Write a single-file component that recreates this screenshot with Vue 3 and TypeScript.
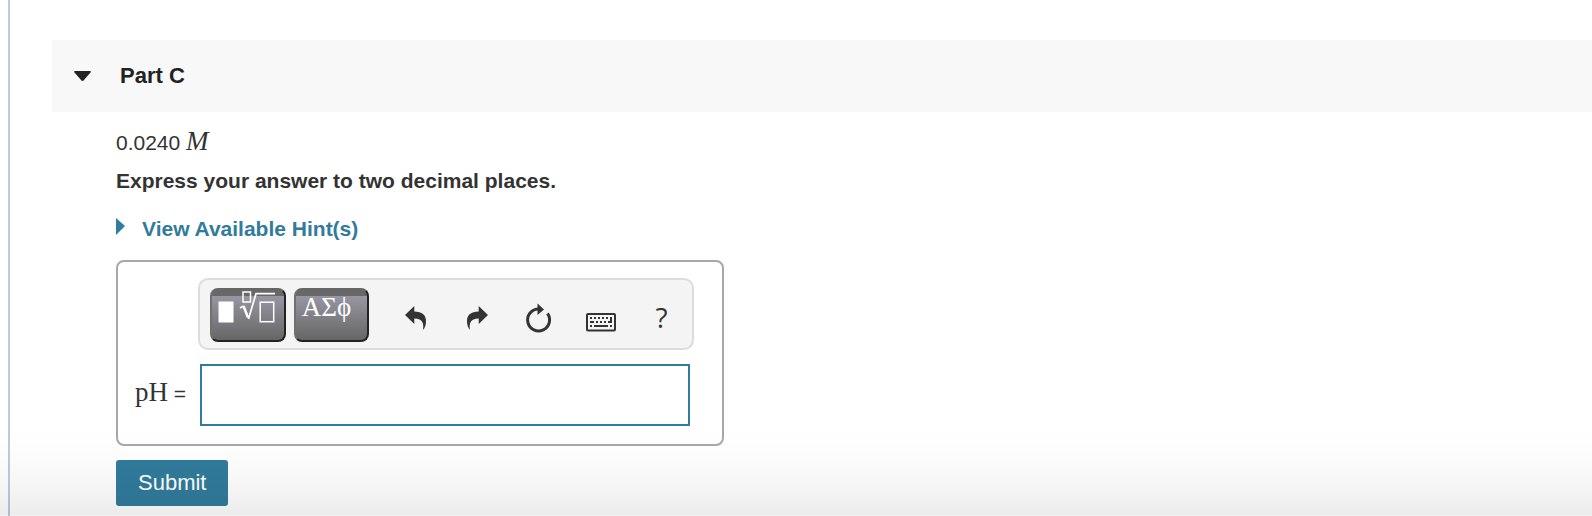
<script setup lang="ts">
import { ref } from 'vue'

const expanded = ref(true)
const answer = ref('')
</script>

<template>
  <main class="page">
    <section class="part">
      <h2 class="part-heading">
        <button class="part-toggle" type="button" :aria-expanded="expanded" @click="expanded = !expanded">
          <svg class="caret" viewBox="0 0 17 10" aria-hidden="true">
            <path d="M1 0H16Q17.5 0.4 16.5 1.6L10 9Q8.500 10.800 7 9L0.500 1.600Q-0.500 0.400 1 0Z" />
          </svg>
          <span>Part C</span>
        </button>
      </h2>

      <div v-if="expanded" class="content">
        <p class="line">0.0240 <i class="math">M</i></p>
        <p class="line strong">Express your answer to two decimal places.</p>
        <a class="hints" href="#hints">
          <svg class="hint-arrow" viewBox="0 0 9 17" aria-hidden="true">
            <path d="M0 0L9 8L0 17Z" />
          </svg>
          <span>View Available Hint(s)</span>
        </a>

        <form @submit.prevent>
          <div class="answer-box">
            <div class="toolbar" role="toolbar" aria-label="Equation tools">
              <button class="palette" type="button" aria-label="Templates">
                <svg class="templates" viewBox="0 0 72 50" aria-hidden="true">
                  <rect x="6.500" y="11.500" width="15" height="21" fill="#fff" />
                  <g fill="none" stroke="#fff">
                    <rect x="31" y="2" width="7.500" height="10" stroke-width="1.500" />
                    <path d="M28 18L31.500 16" stroke-width="1.500" />
                    <path d="M31.500 16L36 27.500" stroke-width="2.500" />
                    <path d="M36.500 29L44 3.700H63" stroke-width="1.700" />
                    <rect x="48.200" y="12.200" width="13.500" height="19.500" stroke-width="1.500" />
                  </g>
                </svg>
              </button>
              <button class="palette symbols" type="button" aria-label="Symbols">ΑΣϕ</button>
              <div class="actions">
                <button class="action" type="button" aria-label="Undo">
                  <svg class="icon" viewBox="0 0 32 34" aria-hidden="true">
                    <path d="M5 15L14.300 6V11.500C22 11.500 26 15 26 21C26 25 25 28 23 30C24 24 23 18.500 14.300 18.500V24Z" />
                  </svg>
                </button>
                <button class="action" type="button" aria-label="Redo">
                  <svg class="icon" viewBox="0 0 32 34" aria-hidden="true">
                    <path d="M27 15L17.700 6V11.500C10 11.500 6 15 6 21C6 25 7 28 9 30C8 24 9 18.500 17.700 18.500V24Z" />
                  </svg>
                </button>
                <button class="action" type="button" aria-label="Reset" @click="answer = ''">
                  <svg class="icon" viewBox="0 0 32 34" aria-hidden="true">
                    <path d="M16 9A11 11 0 1 0 25.500 13.500" fill="none" stroke="#333" stroke-width="3" />
                    <path d="M15.500 3.500L22 9.500L15.500 15Z" />
                  </svg>
                </button>
                <button class="action keyboard" type="button" aria-label="Keyboard shortcuts">
                  <svg class="icon" viewBox="0 0 32 34" aria-hidden="true">
                    <rect x="3" y="14" width="28" height="16.500" rx="1" fill="none" stroke="#333" stroke-width="2" />
                    <path d="M6 17h2v2h-2zM10 17h2v2h-2zM14 17h2v2h-2zM18 17h2v2h-2zM22 17h2v2h-2zM6 21h4v2h-4zM12 21h2v2h-2zM16 21h2v2h-2zM20 21h2v2h-2zM26 17h2v6h-4v-2h2zM6 25h2v2h-2zM10 25h14v2h-14zM26 25h2v2h-2z" />
                  </svg>
                </button>
                <button class="action help" type="button" aria-label="Help">?</button>
              </div>
            </div>
            <label class="label" for="ph-answer"><span class="math">pH</span> =</label>
            <input id="ph-answer" v-model="answer" class="answer" type="text" autocomplete="off" />
          </div>
          <button class="submit" type="submit">Submit</button>
        </form>
      </div>
    </section>
  </main>
</template>

<style>
body {
  margin: 0;
}
</style>

<style scoped>
.page {
  position: relative;
  box-sizing: border-box;
  min-height: 100vh;
  margin-left: 8px;
  padding: 40px 0 10px 42px;
  border-left: 2px solid #bccbdf;
  background: #fff;
  color: #333;
  font-family: "Liberation Sans", Arial, sans-serif;
  font-size: 21px;
}

.page::after {
  content: "";
  position: absolute;
  inset: auto 0 0 -10px;
  height: 88px;
  box-sizing: border-box;
  border-bottom: 1px solid rgba(0, 0, 0, 0.05);
  background: linear-gradient(rgba(0, 0, 0, 0), rgba(0, 0, 0, 0.012) 35%, rgba(0, 0, 0, 0.045) 72%, rgba(0, 0, 0, 0.075));
  pointer-events: none;
}

button {
  margin: 0;
  padding: 0;
  border: 0;
  background: none;
  color: inherit;
  font: inherit;
  cursor: pointer;
}

.part-heading {
  margin: 0;
  background: #f8f8f8;
  color: #222;
  font-size: 22px;
  font-weight: bold;
}

.part-toggle {
  display: flex;
  align-items: center;
  gap: 29px;
  width: 100%;
  height: 72px;
  padding-left: 22px;
}

.caret {
  width: 17px;
  height: 10px;
  fill: #222;
}

.content {
  padding: 12px 0 0 64px;
}

.line {
  margin: 0;
  line-height: 38px;
}

.strong {
  font-weight: bold;
}

.math {
  font-family: "Liberation Serif", "Times New Roman", serif;
  font-size: 27px;
  line-height: 1;
}

.hints {
  display: inline-flex;
  align-items: center;
  gap: 17px;
  margin: 10px 0 12px;
  color: #317b9c;
  font-weight: bold;
  line-height: 38px;
  text-decoration: none;
}

.hint-arrow {
  width: 9px;
  height: 17px;
  margin-bottom: 6px;
  fill: currentColor;
}

.answer-box {
  display: grid;
  grid-template-columns: 63px minmax(0, 1fr);
  row-gap: 14px;
  box-sizing: border-box;
  max-width: 608px;
  padding: 16px 28px 18px 17px;
  border: 2px solid #a8a8a8;
  border-radius: 8px;
}

.toolbar {
  grid-column: 2;
  display: flex;
  gap: 8px;
  padding: 8px 0 6px 10px;
  border: 2px solid #dcdcdc;
  border-radius: 10px;
  background: #f4f4f4;
}

.palette {
  box-sizing: border-box;
  width: 76px;
  height: 54px;
  border: 2px solid #222;
  border-top-color: #666;
  border-left-color: #707070;
  border-radius: 8px;
  background: linear-gradient(#686868 6px, #9896a2 6px, #666 100%);
  color: #fff;
}

.templates {
  display: block;
  width: 72px;
  height: 50px;
}

.symbols {
  padding: 0 10px 16px 0;
  font-family: "Liberation Serif", "Times New Roman", serif;
  font-size: 27px;
  line-height: 30px;
}

.actions {
  display: flex;
  margin-left: 8px;
}

.action {
  display: flex;
  align-items: center;
  justify-content: center;
  width: 61px;
  padding-top: 4px;
  color: #333;
}

.keyboard {
  width: 63px;
}

.icon {
  width: 32px;
  height: 34px;
  fill: currentColor;
}

.help {
  font-family: "Open Sans", sans-serif;
  font-size: 28px;
}

.label {
  align-self: center;
  padding-bottom: 6px;
  white-space: nowrap;
}

.answer {
  box-sizing: border-box;
  min-width: 0;
  height: 62px;
  margin: 0 4px 0 2px;
  padding: 0 12px;
  border: 2px solid #317b9c;
  border-radius: 0;
  background: #fff;
  color: #333;
  font: inherit;
  outline: none;
}

.submit {
  display: block;
  height: 46px;
  margin-top: 14px;
  padding: 0 22px;
  border-radius: 3px;
  background: #317b9c;
  color: #fff;
  font-size: 22px;
}
</style>
